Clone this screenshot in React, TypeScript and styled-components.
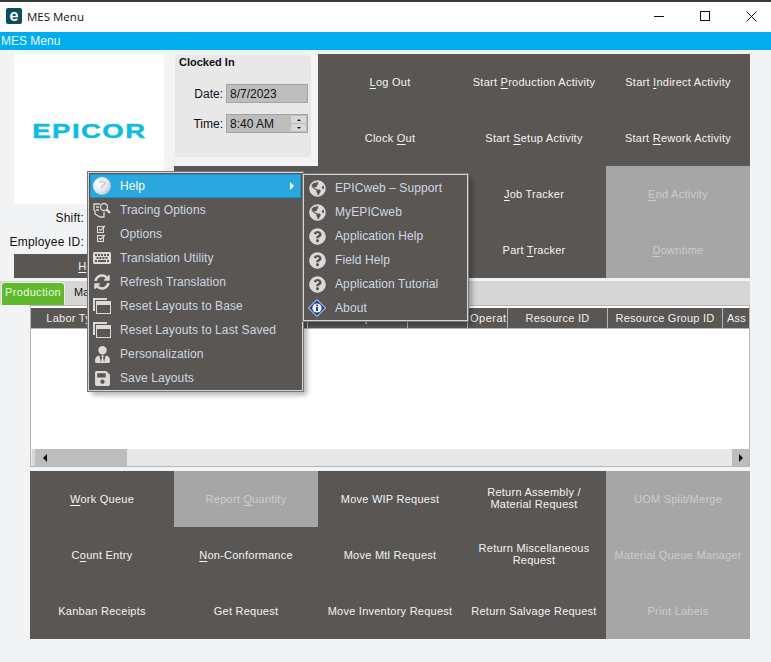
import React, { FC, ReactNode } from "react";
import styled, { createGlobalStyle } from "styled-components";
import { FaGlobeAmericas, FaQuestionCircle, FaSave, FaUserTie, FaSyncAlt, FaKeyboard } from "react-icons/fa";

const GlobalStyle = createGlobalStyle`
  html, body { margin: 0; padding: 0; background: #f2f3f5; }
  body { font-family: "Liberation Sans", Arial, sans-serif; font-size: 12px; color: #111; }
`;

const Page = styled.div`
  position: relative;
  width: 771px;
  height: 662px;
  overflow: hidden;
  background: #f2f3f5;
`;

const DesktopEdge = styled.div`
  height: 2px;
  background: #3c3b3b;
`;

const TitleBar = styled.header`
  display: flex;
  align-items: center;
  height: 30px;
  padding: 0 0 2px 6px;
  box-sizing: border-box;
  background: #fff;
`;

const AppIcon = styled.span`
  display: flex;
  align-items: center;
  justify-content: center;
  width: 16px;
  height: 16px;
  border-radius: 2px;
  background: #0b4f5e;
  color: #fff;
  font: 700 16px/14px "Liberation Sans", sans-serif;
`;

const TitleText = styled.span`
  margin-left: 5px;
  font: 11.5px "Open Sans", "Noto Sans", sans-serif;
  color: #111;
`;

const WindowControls = styled.div`
  display: flex;
  margin-left: auto;
  margin-right: -3px;
`;

const WindowButton = styled.span`
  display: flex;
  align-items: center;
  justify-content: center;
  width: 46px;
  height: 28px;
`;

const BlueBar = styled.div`
  height: 18px;
  padding-left: 1px;
  background: #00aeef;
  color: #e8f8ff;
  font-size: 12px;
  line-height: 18px;
`;

const TopArea = styled.section`
  display: flex;
  padding: 4px 0 0 14px;
`;

const LeftColumn = styled.div`
  display: flex;
  flex-direction: column;
  width: 160px;
`;

const LogoBox = styled.div`
  display: flex;
  align-items: center;
  justify-content: center;
  width: 150px;
  height: 150px;
  background: #fff;
`;

const LogoText = styled.span`
  color: #0cbce6;
  font: 700 19px/1 "Liberation Sans", sans-serif;
  letter-spacing: 1px;
  -webkit-text-stroke: 0.4px #0cbce6;
  transform: scale(1.45, 1.1) translateY(1px);
`;

const FieldRow = styled.div`
  display: flex;
  align-items: center;
  justify-content: flex-end;
  width: 70px;
  height: 24px;
  letter-spacing: 0.2px;
  white-space: nowrap;
`;

const FirstFieldRow = styled(FieldRow)`
  margin-top: 2px;
`;

const MiddleColumn = styled.div`
  display: flex;
  flex-direction: column;
  width: 144px;
`;

const ClockPanel = styled.div`
  height: 102px;
  margin: 1px 7px 9px 1px;
  padding: 0 3px 0 4px;
  box-sizing: border-box;
  border-radius: 4px;
  background: #e8e8e8;
`;

const ClockTitle = styled.div`
  font-weight: 700;
  font-size: 11px;
  line-height: 14px;
  margin-bottom: 15px;
`;

const ClockRow = styled.div`
  display: flex;
  align-items: center;
  justify-content: flex-end;
  gap: 3px;
  height: 19px;
  margin-bottom: 11px;
`;

const ClockField = styled.div`
  display: flex;
  align-items: center;
  width: 82px;
  height: 19px;
  box-sizing: border-box;
  padding-left: 3px;
  border: 1px solid #a3a3a3;
  background: #bdbdbd;
`;

const Spinner = styled.div`
  display: flex;
  flex-direction: column;
  gap: 1px;
  margin-left: auto;
  margin-right: 1px;
`;

const SpinButton = styled.span<{ $up?: boolean }>`
  display: flex;
  align-items: center;
  justify-content: center;
  width: 15px;
  height: 7px;
  background: #d8d8d8;
  &::after {
    content: "";
    border-left: 2px solid transparent;
    border-right: 2px solid transparent;
    ${(p) => (p.$up ? "border-bottom: 2px solid #111;" : "border-top: 2px solid #111;")}
  }
`;

const TileGrid = styled.div<{ $cols: number }>`
  display: grid;
  grid-template-columns: repeat(${(p) => p.$cols}, 144px);
  grid-auto-rows: 56px;
`;

const Tile = styled.div<{ $off?: boolean }>`
  display: flex;
  align-items: center;
  justify-content: center;
  padding: 0 6px;
  box-sizing: border-box;
  background: ${(p) => (p.$off ? "#a6a6a6" : "#595653")};
  color: ${(p) => (p.$off ? "#cccccc" : "#f4f4f4")};
  font-size: 11px;
  line-height: 12px;
  letter-spacing: 0.25px;
  text-align: center;
`;

const TwoLines = styled.span`
  margin-top: -2px;
`;

const HelpTile = styled(Tile)`
  height: 24px;
  padding: 0 8px 0 0;
`;

const TabStrip = styled.nav`
  display: flex;
  width: 750px;
  height: 24px;
  margin-top: 3px;
  padding-left: 1px;
  box-sizing: border-box;
  background: #d6d6d6;
`;

const TabItem = styled.div<{ $active?: boolean }>`
  box-sizing: border-box;
  height: ${(p) => (p.$active ? "23px" : "24px")};
  margin-top: ${(p) => (p.$active ? "1px" : "0")};
  padding: ${(p) => (p.$active ? "3px 3px 0 3px" : "5px 8px 0 9px")};
  border-radius: 4px 4px 0 0;
  border: ${(p) => (p.$active ? "1px solid #e8f5dc" : "none")};
  border-bottom: none;
  background: ${(p) => (p.$active ? "#62b82c" : "transparent")};
  color: ${(p) => (p.$active ? "#eafbe0" : "#111")};
  font-size: 11px;
  letter-spacing: ${(p) => (p.$active ? "0.35px" : "0")};
  white-space: nowrap;
`;

const Table = styled.section`
  display: flex;
  flex-direction: column;
  width: 720px;
  height: 162px;
  margin-left: 30px;
  box-sizing: border-box;
  border: 1px solid #b5b5b5;
  background: #fff;
`;

const HeaderRow = styled.div`
  display: grid;
  grid-template-columns: 89px 88px 100px 100px 60px 40px 100px 115px 1fr;
  height: 21px;
  margin-top: 2px;
  background: #595653;
  border-bottom: 1px solid #b5b5b5;
  box-sizing: border-box;
  overflow: hidden;
`;

const HeaderCell = styled.div<{ $left?: boolean; $open?: boolean }>`
  padding: 0 ${(p) => (p.$left ? "2px" : "4px")};
  box-sizing: border-box;
  border-right: ${(p) => (p.$open ? "none" : "1px solid #b5b5b5")};
  color: #f0f0f0;
  font-size: 11px;
  line-height: 20px;
  letter-spacing: ${(p) => (p.$left ? "0.5px" : "0.25px")};
  text-align: ${(p) => (p.$left ? "left" : "center")};
  white-space: nowrap;
  overflow: hidden;
`;

const TableBody = styled.div`
  flex: 1;
`;

const ScrollBar = styled.div`
  display: flex;
  align-items: center;
  height: 17px;
  background: #e8e8e8;
`;

const ScrollThumb = styled.div`
  display: flex;
  align-items: center;
  width: 95px;
  height: 17px;
  margin-left: 1px;
  padding-left: 11px;
  box-sizing: border-box;
  background: linear-gradient(to right, #d8d8d8 0 3px, #bdbdbd 3px);
`;

const ScrollEnd = styled.div`
  display: flex;
  align-items: center;
  justify-content: center;
  width: 17px;
  height: 17px;
  margin-left: auto;
  background: #bdbdbd;
`;

const Arrow = styled.span<{ $right?: boolean; $size?: number; $color?: string }>`
  width: 0;
  height: 0;
  border-top: ${(p) => p.$size ?? 4}px solid transparent;
  border-bottom: ${(p) => p.$size ?? 4}px solid transparent;
  ${(p) =>
    p.$right
      ? `border-left: ${p.$size ?? 4}px solid ${p.$color ?? "#111"};`
      : `border-right: ${p.$size ?? 4}px solid ${p.$color ?? "#111"};`}
`;

const BottomGrid = styled(TileGrid)`
  margin: 4px 0 0 30px;
`;

const Menu = styled.div<{ $x: number; $y: number; $w: number }>`
  position: absolute;
  left: ${(p) => p.$x}px;
  top: ${(p) => p.$y}px;
  width: ${(p) => p.$w}px;
  box-sizing: border-box;
  padding: 1px 1px 0;
  border: 1px solid #d4d4d4;
  outline: 1px solid #77767a;
  background: #595653;
  box-shadow: 4px 4px 5px rgba(0, 0, 0, 0.3);
`;

const MenuRow = styled.div<{ $active?: boolean; $textLeft: number }>`
  display: flex;
  align-items: center;
  height: 24px;
  box-sizing: border-box;
  border: 1px solid ${(p) => (p.$active ? "#1f93c9" : "transparent")};
  background: ${(p) => (p.$active ? "#29a8e0" : "transparent")};
  color: ${(p) => (p.$active ? "#ffffff" : "#cfd6e4")};
  font-size: 12px;
  letter-spacing: 0.1px;
  white-space: nowrap;
  & > span:first-child {
    display: flex;
    align-items: center;
    justify-content: center;
    flex: none;
    width: ${(p) => p.$textLeft}px;
    padding-right: ${(p) => p.$textLeft - 22}px;
    box-sizing: border-box;
  }
`;

const SubArrow = styled.span`
  display: flex;
  margin-left: auto;
  margin-right: 6px;
`;

const Mn = styled.u`
  text-underline-offset: 2px;
`;

const ico = "#dadada";

const HelpBall: FC = () => (
  <svg width="20" height="20" viewBox="0 0 20 20">
    <defs>
      <radialGradient id="ball" cx="0.35" cy="0.35" r="0.8">
        <stop offset="0" stopColor="#ffffff" />
        <stop offset="0.6" stopColor="#dfe6ea" />
        <stop offset="1" stopColor="#9fb4bf" />
      </radialGradient>
    </defs>
    <circle cx="10" cy="10" r="9" fill="url(#ball)" />
    <path d="M7 7 q3 -3 6 0 q0 2 -3 3 v2" fill="none" stroke="#c4ced4" strokeWidth="1.6" />
  </svg>
);

const TraceIcon: FC = () => (
  <svg width="18" height="18" viewBox="0 0 18 18" fill="none" stroke={ico} strokeWidth="1.3">
    <path d="M7 3H1v6l1 1v3l5 3h4v-5" />
    <path d="M3 6h3M3 9h3" />
    <circle cx="11" cy="6" r="3.5" />
    <path d="M13.5 8.5 17 12" strokeWidth="2.4" />
  </svg>
);

const OptionsIcon: FC = () => (
  <svg width="18" height="18" viewBox="0 0 18 18" fill="none" stroke={ico} strokeWidth="1.1">
    <rect x="4.5" y="1.5" width="6" height="6" />
    <rect x="4.5" y="10.5" width="6" height="6" />
    <path d="M6 4l1.5 1.5L12 1M6 13l1.5 1.5L12 10" />
  </svg>
);

const WindowsIcon: FC = () => (
  <svg width="18" height="16" viewBox="0 0 18 16">
    <path d="M0 0h14v2H2v11H0z" fill={ico} />
    <rect x="3.5" y="3.5" width="14" height="12" fill="none" stroke={ico} />
    <rect x="4" y="4" width="13" height="3" fill={ico} />
  </svg>
);

const AboutIcon: FC = () => (
  <svg width="18" height="18" viewBox="0 0 18 18">
    <path d="M9 .5 17.5 9 9 17.5.5 9z" fill="#1f3fa8" stroke="#e8eefc" strokeWidth="1" />
    <circle cx="9" cy="9" r="4.6" fill="#f4f7ff" />
    <rect x="8" y="8" width="2" height="4" fill="#1f3fa8" />
    <rect x="8" y="5.6" width="2" height="1.6" fill="#1f3fa8" />
  </svg>
);

const mainItems: { label: string; icon: ReactNode }[] = [
  { label: "Help", icon: <HelpBall /> },
  { label: "Tracing Options", icon: <TraceIcon /> },
  { label: "Options", icon: <OptionsIcon /> },
  { label: "Translation Utility", icon: <FaKeyboard size={18} color={ico} /> },
  { label: "Refresh Translation", icon: <FaSyncAlt size={16} color={ico} /> },
  { label: "Reset Layouts to Base", icon: <WindowsIcon /> },
  { label: "Reset Layouts to Last Saved", icon: <WindowsIcon /> },
  { label: "Personalization", icon: <FaUserTie size={17} color={ico} /> },
  { label: "Save Layouts", icon: <FaSave size={17} color={ico} /> },
];

const subItems: { label: string; icon: ReactNode }[] = [
  { label: "EPICweb – Support", icon: <FaGlobeAmericas size={17} color={ico} /> },
  { label: "MyEPICweb", icon: <FaGlobeAmericas size={17} color={ico} /> },
  { label: "Application Help", icon: <FaQuestionCircle size={17} color={ico} /> },
  { label: "Field Help", icon: <FaQuestionCircle size={17} color={ico} /> },
  { label: "Application Tutorial", icon: <FaQuestionCircle size={17} color={ico} /> },
  { label: "About", icon: <AboutIcon /> },
];

export default function App() {
  return (
    <Page>
      <GlobalStyle />
      <DesktopEdge />
      <TitleBar>
        <AppIcon>e</AppIcon>
        <TitleText>MES Menu</TitleText>
        <WindowControls>
          <WindowButton>
            <svg width="10" height="10" viewBox="0 0 10 10"><path d="M0 5.5h10" stroke="#111" /></svg>
          </WindowButton>
          <WindowButton>
            <svg width="10" height="10" viewBox="0 0 10 10"><rect x=".5" y=".5" width="9" height="9" fill="none" stroke="#111" /></svg>
          </WindowButton>
          <WindowButton>
            <svg width="11" height="11" viewBox="0 0 11 11"><path d="M.5.5l10 10M10.5.5l-10 10" stroke="#111" /></svg>
          </WindowButton>
        </WindowControls>
      </TitleBar>
      <BlueBar>MES Menu</BlueBar>

      <TopArea>
        <LeftColumn>
          <LogoBox>
            <LogoText>EPICOR</LogoText>
          </LogoBox>
          <FirstFieldRow>Shift:</FirstFieldRow>
          <FieldRow>Employee ID:</FieldRow>
          <HelpTile><span><Mn>H</Mn>elp</span></HelpTile>
        </LeftColumn>
        <MiddleColumn>
          <ClockPanel>
            <ClockTitle>Clocked In</ClockTitle>
            <ClockRow>
              Date:
              <ClockField>8/7/2023</ClockField>
            </ClockRow>
            <ClockRow>
              Time:
              <ClockField>
                8:40 AM
                <Spinner>
                  <SpinButton $up />
                  <SpinButton />
                </Spinner>
              </ClockField>
            </ClockRow>
          </ClockPanel>
          <TileGrid $cols={1}>
            <Tile />
            <Tile />
          </TileGrid>
        </MiddleColumn>
        <TileGrid $cols={3}>
          <Tile><span><Mn>L</Mn>og Out</span></Tile>
          <Tile><span>Start <Mn>P</Mn>roduction Activity</span></Tile>
          <Tile><span>Start <Mn>I</Mn>ndirect Activity</span></Tile>
          <Tile><span>Clock <Mn>O</Mn>ut</span></Tile>
          <Tile><span>Start <Mn>S</Mn>etup Activity</span></Tile>
          <Tile><span>Start <Mn>R</Mn>ework Activity</span></Tile>
          <Tile />
          <Tile><span><Mn>J</Mn>ob Tracker</span></Tile>
          <Tile $off><span><Mn>E</Mn>nd Activity</span></Tile>
          <Tile />
          <Tile><span>Part <Mn>T</Mn>racker</span></Tile>
          <Tile $off><span><Mn>D</Mn>owntime</span></Tile>
        </TileGrid>
      </TopArea>

      <TabStrip>
        <TabItem $active>Production</TabItem>
        <TabItem>Maintenance</TabItem>
      </TabStrip>

      <Table>
        <HeaderRow>
          <HeaderCell>Labor Type</HeaderCell>
          <HeaderCell>Job</HeaderCell>
          <HeaderCell>Asm</HeaderCell>
          <HeaderCell>Seq</HeaderCell>
          <HeaderCell>Part</HeaderCell>
          <HeaderCell $left>Operat</HeaderCell>
          <HeaderCell>Resource ID</HeaderCell>
          <HeaderCell>Resource Group ID</HeaderCell>
          <HeaderCell $open>Ass</HeaderCell>
        </HeaderRow>
        <TableBody />
        <ScrollBar>
          <ScrollThumb><Arrow $size={4} /></ScrollThumb>
          <ScrollEnd><Arrow $right $size={4} /></ScrollEnd>
        </ScrollBar>
      </Table>

      <BottomGrid $cols={5}>
        <Tile><span><Mn>W</Mn>ork Queue</span></Tile>
        <Tile $off><span>Report <Mn>Q</Mn>uantity</span></Tile>
        <Tile>Move WIP Request</Tile>
        <Tile><TwoLines>Return Assembly / Material Request</TwoLines></Tile>
        <Tile $off>UOM Split/Merge</Tile>
        <Tile><span>C<Mn>o</Mn>unt Entry</span></Tile>
        <Tile><span><Mn>N</Mn>on-Conformance</span></Tile>
        <Tile>Move Mtl Request</Tile>
        <Tile><TwoLines>Return Miscellaneous Request</TwoLines></Tile>
        <Tile $off>Material Queue Manager</Tile>
        <Tile>Kanban Receipts</Tile>
        <Tile>Get Request</Tile>
        <Tile>Move Inventory Request</Tile>
        <Tile>Return Salvage Request</Tile>
        <Tile $off>Print Labels</Tile>
      </BottomGrid>

      <Menu $x={88} $y={172} $w={215}>
        {mainItems.map((item, i) => (
          <MenuRow key={item.label} $active={i === 0} $textLeft={29}>
            <span>{item.icon}</span>
            <span>{item.label}</span>
            {i === 0 && <SubArrow><Arrow $right $size={4} $color="#fff" /></SubArrow>}
          </MenuRow>
        ))}
      </Menu>
      <Menu $x={303} $y={174} $w={165}>
        {subItems.map((item) => (
          <MenuRow key={item.label} $textLeft={29}>
            <span>{item.icon}</span>
            <span>{item.label}</span>
          </MenuRow>
        ))}
      </Menu>
    </Page>
  );
}
